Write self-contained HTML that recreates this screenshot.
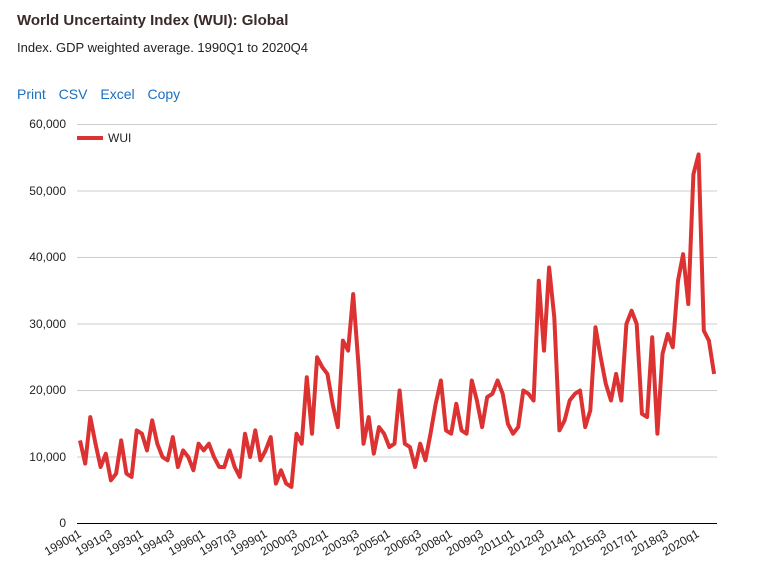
<!DOCTYPE html>
<html><head><meta charset="utf-8"><style>
body{margin:0;background:#fff;width:759px;height:583px;overflow:hidden;font-family:"Liberation Sans","Noto Sans CJK JP",sans-serif;}
.t{position:absolute;left:17px;top:12px;font-size:15px;font-weight:bold;color:#3a2a2a;}
.s{position:absolute;left:17px;top:40px;font-size:13px;color:#222;}
.l{position:absolute;left:17px;top:86px;font-size:14px;color:#1a6fc0;word-spacing:9px;}
svg{position:absolute;left:0;top:0}
</style></head><body>
<div class="t">World Uncertainty Index (WUI): Global</div>
<div class="s">Index. GDP weighted average. 1990Q1 to 2020Q4</div>
<div class="l">Print CSV Excel Copy</div>
<svg width="759" height="583" font-family="Liberation Sans, sans-serif" font-size="12">
<g stroke="#ccc" stroke-width="1">
<line x1="77" x2="717" y1="124.5" y2="124.5"/><line x1="77" x2="717" y1="191" y2="191"/><line x1="77" x2="717" y1="257.5" y2="257.5"/><line x1="77" x2="717" y1="324" y2="324"/><line x1="77" x2="717" y1="390.5" y2="390.5"/><line x1="77" x2="717" y1="457" y2="457"/>
</g>
<line x1="77" x2="717" y1="523.5" y2="523.5" stroke="#000"/>
<g text-anchor="end" fill="#222">
<text x="66" y="128">60,000</text><text x="66" y="195">50,000</text><text x="66" y="261">40,000</text><text x="66" y="328">30,000</text><text x="66" y="394">20,000</text><text x="66" y="461">10,000</text><text x="66" y="527">0</text>
</g>
<line x1="77" x2="103" y1="138" y2="138" stroke="#dc3232" stroke-width="4"/>
<text x="108" y="142" fill="#222">WUI</text>
<polyline id="p" fill="none" stroke="#dc3232" stroke-width="4" stroke-linejoin="round" points=""/>
<g text-anchor="end" fill="#222" font-size="12">
<text transform="translate(82,536) rotate(-30)">1990q1</text>
<text transform="translate(113,536) rotate(-30)">1991q3</text>
<text transform="translate(144,536) rotate(-30)">1993q1</text>
<text transform="translate(175,536) rotate(-30)">1994q3</text>
<text transform="translate(206,536) rotate(-30)">1996q1</text>
<text transform="translate(237,536) rotate(-30)">1997q3</text>
<text transform="translate(268,536) rotate(-30)">1999q1</text>
<text transform="translate(298,536) rotate(-30)">2000q3</text>
<text transform="translate(329,536) rotate(-30)">2002q1</text>
<text transform="translate(360,536) rotate(-30)">2003q3</text>
<text transform="translate(391,536) rotate(-30)">2005q1</text>
<text transform="translate(422,536) rotate(-30)">2006q3</text>
<text transform="translate(453,536) rotate(-30)">2008q1</text>
<text transform="translate(484,536) rotate(-30)">2009q3</text>
<text transform="translate(515,536) rotate(-30)">2011q1</text>
<text transform="translate(545,536) rotate(-30)">2012q3</text>
<text transform="translate(576,536) rotate(-30)">2014q1</text>
<text transform="translate(607,536) rotate(-30)">2015q3</text>
<text transform="translate(638,536) rotate(-30)">2017q1</text>
<text transform="translate(669,536) rotate(-30)">2018q3</text>
<text transform="translate(700,536) rotate(-30)">2020q1</text>
</g>
</svg>
<script>
var d=[12.5,9,16,12,8.5,10.5,6.5,7.5,12.5,7.5,7,14,13.5,11,15.5,12,10,9.5,13,8.5,11,10,8,12,11,12,10,8.5,8.5,11,8.5,7,13.5,10,14,9.5,11,13,6,8,6,5.5,13.5,12,22,13.5,25,23.5,22.5,18,14.5,27.5,26,34.5,24,12,16,10.5,14.5,13.5,11.5,12,20,12,11.5,8.5,12,9.5,13.5,18,21.5,14,13.5,18,14,13.5,21.5,18.5,14.5,19,19.5,21.5,19.5,15,13.5,14.5,20,19.5,18.5,36.5,26,38.5,31,14,15.5,18.5,19.5,20,14.5,17,29.5,25,21,18.5,22.5,18.5,30,32,30,16.5,16,28,13.5,25.5,28.5,26.5,36.5,40.5,33,52.5,55.5,29,27.5,22.5];
var s=[];for(var i=0;i<d.length;i++){s.push((80+i*5.155).toFixed(1)+","+(523.5-d[i]*6.65).toFixed(1));}
document.getElementById("p").setAttribute("points",s.join(" "));
</script>
</body></html>
